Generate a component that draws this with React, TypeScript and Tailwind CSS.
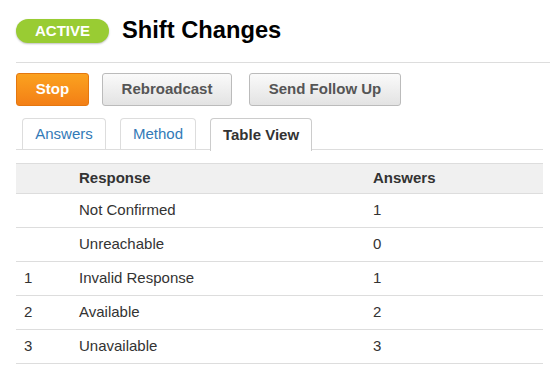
import React from "react";

const rows = [
  { n: "", r: "Not Confirmed", a: "1" },
  { n: "", r: "Unreachable", a: "0" },
  { n: "1", r: "Invalid Response", a: "1" },
  { n: "2", r: "Available", a: "2" },
  { n: "3", r: "Unavailable", a: "3" },
];

export default function App() {
  return (
    <div
      className="w-[550px] h-[379px] bg-white text-[#333] pl-4 pr-[7px] pt-[19px]"
      style={{ fontFamily: '"Liberation Sans", Arial, sans-serif' }}
    >
      <div className="flex items-center h-6">
        <span className="w-[93px] h-6 rounded-full bg-[#99cc33] text-white font-bold text-[15px] flex items-center justify-center shadow-[0_1px_2px_rgba(0,0,0,0.25)]">
          ACTIVE
        </span>
        <h1 className="ml-[13px] text-[23.7px] font-bold text-black leading-none">Shift Changes</h1>
      </div>
      <div className="mt-[19px] border-t border-[#ddd] -mr-[7px]" />
      <div className="flex mt-[10px] gap-[13px]">
        <button className="w-[73px] h-[33px] rounded-[3px] border border-[#e5770f] bg-gradient-to-b from-[#fba21f] to-[#f37f16] text-white font-bold text-[15px]">
          Stop
        </button>
        <button className="w-[130px] h-[33px] rounded-[3px] border border-[#bbb] bg-gradient-to-b from-[#fafafa] to-[#e3e3e3] text-[#555] font-bold text-[15px]">
          Rebroadcast
        </button>
        <button className="ml-[4px] w-[152px] h-[33px] rounded-[3px] border border-[#bbb] bg-gradient-to-b from-[#fafafa] to-[#e3e3e3] text-[#555] font-bold text-[15px]">
          Send Follow Up
        </button>
      </div>
      <div className="flex mt-[12px] pl-[6px] gap-[14px] border-b border-[#ddd] h-[32px]">
        <div className="w-[84px] h-[32px] border border-b-0 border-[#ddd] rounded-t-[4px] text-[#337ab7] text-[15px] flex items-center justify-center">
          Answers
        </div>
        <div className="w-[76px] h-[32px] border border-b-0 border-[#ddd] rounded-t-[4px] text-[#337ab7] text-[15px] flex items-center justify-center">
          Method
        </div>
        <div className="w-[102px] h-[33px] bg-white border border-b-0 border-[#ccc] rounded-t-[4px] text-[#333] font-bold text-[15px] flex items-center justify-center">
          Table View
        </div>
      </div>
      <table className="mt-[13px] w-full text-[15px] border-collapse">
        <thead>
          <tr className="bg-[#f0f0f0] h-[30px] border-t border-b border-[#ddd]">
            <th className="w-[63px]" />
            <th className="text-left font-bold w-[294px]">Response</th>
            <th className="text-left font-bold">Answers</th>
          </tr>
        </thead>
        <tbody>
          {rows.map((row, i) => (
            <tr key={i} className="h-[34px] border-b border-[#ddd]">
              <td className="pl-2">{row.n}</td>
              <td>{row.r}</td>
              <td>{row.a}</td>
            </tr>
          ))}
        </tbody>
      </table>
    </div>
  );
}
